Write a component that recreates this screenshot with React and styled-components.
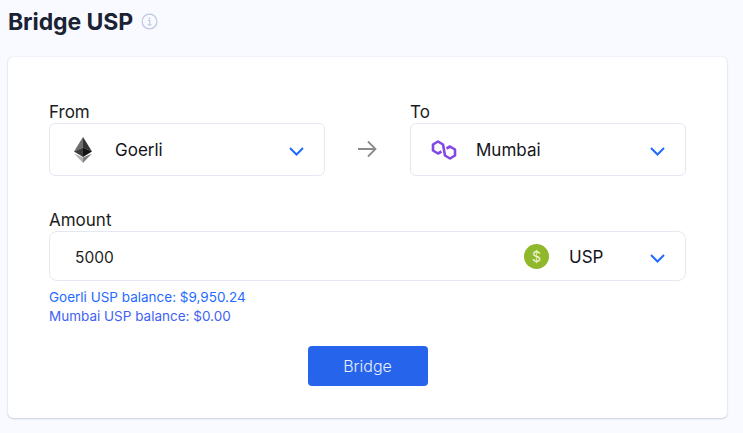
import React from "react";
import styled, { createGlobalStyle } from "styled-components";

const GlobalStyle = createGlobalStyle`
  html, body {
    margin: 0;
    padding: 0;
    background: #f8faff;
    font-family: Inter, "Noto Sans", sans-serif;
  }
`;

const Page = styled.div`
  width: 743px;
  height: 433px;
  box-sizing: border-box;
  padding: 0 16px 0 8px;
  overflow: hidden;
`;

const Header = styled.div`
  display: flex;
  align-items: center;
  gap: 8px;
  height: 43px;
  margin-bottom: 14px;
`;

const Title = styled.h1`
  margin: 0;
  font-size: 23px;
  font-weight: 700;
  color: #1a2233;
  letter-spacing: -0.1px;
`;

const Card = styled.div`
  box-sizing: border-box;
  height: 361px;
  padding: 46px 41px 0;
  background: #fff;
  border-radius: 5px;
  box-shadow: 0 0 1px rgba(150, 165, 190, 0.5), 0 1px 2px rgba(150, 165, 190, 0.45);
`;

const Networks = styled.div`
  display: grid;
  grid-template-columns: 276px 85px 276px;
  margin-bottom: 35px;
`;

const Field = styled.div`
  display: flex;
  flex-direction: column;
`;

const Label = styled.label`
  font-size: 17px;
  line-height: 18px;
  margin-bottom: 2px;
  color: #1c1c22;
`;

const Select = styled.div`
  box-sizing: border-box;
  display: flex;
  align-items: center;
  height: 53px;
  padding: 0 20px;
  border: 1px solid #e3e8f2;
  border-radius: 6px;
  font-size: 17px;
  color: #14141a;
`;

const IconSlot = styled.span`
  display: flex;
  justify-content: center;
  width: 26px;
  margin-right: 19px;
`;

const Name = styled.span`
  flex: 1;
`;

const ArrowCell = styled.div`
  display: flex;
  align-items: center;
  justify-content: center;
  padding: 18px 2px 0 0;
`;

const AmountBox = styled.div`
  box-sizing: border-box;
  display: flex;
  align-items: center;
  height: 50px;
  padding: 0 20px 0 25px;
  border: 1px solid #e3e8f2;
  border-radius: 8px;
  font-size: 17px;
  color: #14141a;
`;

const AmountValue = styled.span`
  flex: 1;
  padding-top: 3px;
  font-size: 15.500px;
  color: #1c1c22;
`;

const Coin = styled.span`
  display: flex;
  align-items: center;
  justify-content: center;
  width: 25px;
  height: 25px;
  margin-right: 20px;
  border-radius: 50%;
  background: #8fb82c;
  color: #eef5d8;
  font-size: 14px;
`;

const Ticker = styled.span`
  width: 81px;
  padding-top: 1px;
`;

const Balances = styled.div`
  margin-top: 7px;
`;

const Balance = styled.div`
  font-size: 13.500px;
  line-height: 19px;
  color: ${(p) => p.$color};
`;

const Actions = styled.div`
  display: flex;
  justify-content: center;
  margin-top: 20px;
`;

const BridgeButton = styled.button`
  width: 120px;
  height: 40px;
  border: 0;
  border-radius: 4px;
  background: #2764ec;
  color: #e6eeff;
  font-family: inherit;
  font-size: 16px;
  font-weight: 300;
`;

const ChevronSvg = styled.svg`
  margin-top: 4px;
`;

function Chevron() {
  return (
    <ChevronSvg width="15" height="9" viewBox="0 0 15 9" fill="none" stroke="#1f6bff" strokeWidth="2">
      <path d="M1 1l6.500 6.500L14 1" />
    </ChevronSvg>
  );
}

function InfoIcon() {
  return (
    <svg width="17" height="17" viewBox="0 0 17 17" fill="none" stroke="#bcc8de" strokeWidth="1.2">
      <circle cx="8.5" cy="8.5" r="7.4" />
      <path d="M7 7.400h1.700v4.400M6.800 11.900h3.600" />
      <path d="M8.500 4.600v1.400" strokeWidth="1.400" />
    </svg>
  );
}

function EthIcon() {
  return (
    <svg width="18" height="26" viewBox="0 0 18 26">
      <path d="M9 0 0 14.600l9-4z" fill="#6e6e6e" />
      <path d="M9 0l9 14.600-9-4z" fill="#343434" />
      <path d="M0 14.600l9 5.300v-9.300z" fill="#3c3c3c" />
      <path d="M18 14.600l-9 5.300v-9.300z" fill="#141414" />
      <path d="M0 16.400 9 26v-5.600z" fill="#b4b4b4" />
      <path d="M18 16.400 9 26v-5.600z" fill="#808080" />
    </svg>
  );
}

function PolygonIcon() {
  return (
    <svg width="26" height="22" viewBox="0 0 26 22" fill="none" stroke="#8247e5" strokeWidth="2.6" strokeLinejoin="round">
      <path d="M10.500 12.500 7 14.500 2 11.500v-6l5-3 5 3 2 11 5 3 5-3v-6l-5-3-3.500 2" />
    </svg>
  );
}

function ArrowIcon() {
  return (
    <svg width="20" height="18" viewBox="0 0 20 18" fill="none" stroke="#8a8a8a" strokeWidth="1.8">
      <path d="M1 9h17.500M11 1.500 18.500 9 11 16.500" />
    </svg>
  );
}

export default function App() {
  return (
    <Page>
      <GlobalStyle />
      <Header>
        <Title>Bridge USP</Title>
        <InfoIcon />
      </Header>
      <Card>
        <Networks>
          <Field>
            <Label>From</Label>
            <Select>
              <IconSlot>
                <EthIcon />
              </IconSlot>
              <Name>Goerli</Name>
              <Chevron />
            </Select>
          </Field>
          <ArrowCell>
            <ArrowIcon />
          </ArrowCell>
          <Field>
            <Label>To</Label>
            <Select>
              <IconSlot>
                <PolygonIcon />
              </IconSlot>
              <Name>Mumbai</Name>
              <Chevron />
            </Select>
          </Field>
        </Networks>
        <Field>
          <Label>Amount</Label>
          <AmountBox>
            <AmountValue>5000</AmountValue>
            <Coin>$</Coin>
            <Ticker>USP</Ticker>
            <Chevron />
          </AmountBox>
        </Field>
        <Balances>
          <Balance $color="#1f6bff">Goerli USP balance: $9,950.24</Balance>
          <Balance $color="#3f62f5">Mumbai USP balance: $0.00</Balance>
        </Balances>
        <Actions>
          <BridgeButton>Bridge</BridgeButton>
        </Actions>
      </Card>
    </Page>
  );
}
